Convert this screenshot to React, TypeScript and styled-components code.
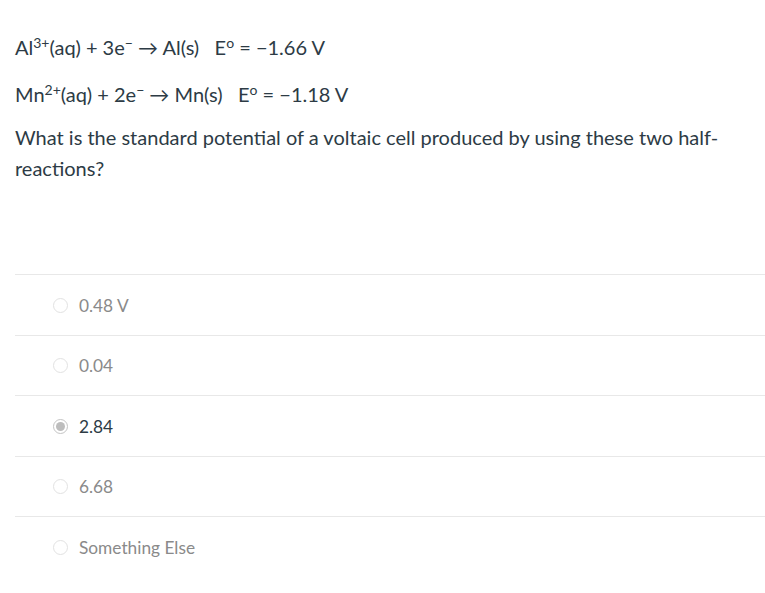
import React from 'react'
import styled, { createGlobalStyle } from 'styled-components'

const GlobalStyle = createGlobalStyle`
  html, body {
    margin: 0;
    padding: 0;
    background: #ffffff;
  }
  body {
    font-family: Lato, 'Open Sans', sans-serif;
    color: #2d3b45;
  }
`

const Page = styled.div`
  padding: 34px 0 0 15px;
  width: 750px;
`

const Equation = styled.p`
  margin: 0 0 21px;
  font-size: 20px;
  line-height: 26px;
  color: #2d3b45;
  white-space: pre;

  &:nth-of-type(2) {
    margin-bottom: 15px;
  }

  sup {
    font-size: 14px;
    line-height: 0;
    vertical-align: 7px;
  }
`

const Question = styled.p`
  margin: 0;
  font-size: 20px;
  line-height: 31px;
  color: #2d3b45;
`

const Answers = styled.ul`
  list-style: none;
  margin: 90px 0 0;
  padding: 0;
`

const AnswerRow = styled.li`
  box-sizing: border-box;
  display: flex;
  align-items: center;
  height: 60px;
  border-top: 1px solid #e8e8e8;
  padding-left: 38px;
  gap: 11px;

  &:nth-child(odd) {
    height: 61px;
  }
`

const Radio = styled.span<{ checked?: boolean }>`
  box-sizing: border-box;
  width: 15px;
  height: 15px;
  border-radius: 50%;
  border: 1px solid ${(p) => (p.checked ? '#c4c4c4' : '#e2e2e2')};
  background: #fff;
  display: flex;
  align-items: center;
  justify-content: center;

  &::after {
    content: '';
    display: ${(p) => (p.checked ? 'block' : 'none')};
    width: 9px;
    height: 9px;
    border-radius: 50%;
    background: #bdbdbd;
  }
`

const AnswerText = styled.span<{ checked?: boolean }>`
  font-size: 17.3px;
  color: ${(p) => (p.checked ? '#2d3b45' : '#8a8a8a')};
`

const answers = ['0.48 V', '0.04', '2.84', '6.68', 'Something Else']

export default function App() {
  return (
    <Page>
      <GlobalStyle />
      <Equation>
        Al<sup>3+</sup>(aq) + 3e<sup>−</sup> → Al(s)   E<sup>o</sup> = −1.66 V
      </Equation>
      <Equation>
        Mn<sup>2+</sup>(aq) + 2e<sup>−</sup> → Mn(s)   E<sup>o</sup> = −1.18 V
      </Equation>
      <Question>
        What is the standard potential of a voltaic cell produced by using these two half-reactions?
      </Question>
      <Answers>
        {answers.map((a) => (
          <AnswerRow key={a}>
            <Radio checked={a === '2.84'} />
            <AnswerText checked={a === '2.84'}>{a}</AnswerText>
          </AnswerRow>
        ))}
      </Answers>
    </Page>
  )
}
